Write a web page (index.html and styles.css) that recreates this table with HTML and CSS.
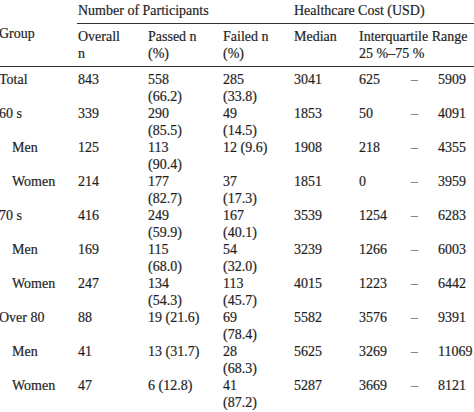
FILE: index.html
```html
<!DOCTYPE html>
<html lang="en">
<head>
<meta charset="utf-8">
<title>Participants and Healthcare Cost</title>
<link rel="stylesheet" href="styles.css">
</head>
<body>
<table class="data">
  <colgroup>
    <col class="c-group">
    <col class="c-overall">
    <col class="c-passed">
    <col class="c-failed">
    <col class="c-median">
    <col class="c-low">
    <col class="c-dash">
    <col class="c-high">
  </colgroup>
  <thead>
    <tr class="head-top">
      <th></th>
      <th colspan="3" class="span-a"><div class="span-label">Number of Participants</div></th>
      <th colspan="4" class="span-b"><div class="span-label">Healthcare Cost (USD)</div></th>
    </tr>
    <tr class="head-sub">
      <th class="group-head">Group</th>
      <th>Overall<br>n</th>
      <th>Passed n<br>(%)</th>
      <th>Failed n<br>(%)</th>
      <th>Median</th>
      <th colspan="3">Interquartile Range<br>25 %–75 %</th>
    </tr>
  </thead>
  <tbody>
    <tr class="first">
      <td>Total</td><td>843</td><td>558<br>(66.2)</td><td>285<br>(33.8)</td>
      <td>3041</td><td>625</td><td class="dash">–</td><td>5909</td>
    </tr>
    <tr>
      <td>60 s</td><td>339</td><td>290<br>(85.5)</td><td>49<br>(14.5)</td>
      <td>1853</td><td>50</td><td class="dash">–</td><td>4091</td>
    </tr>
    <tr>
      <td class="sub">Men</td><td>125</td><td>113<br>(90.4)</td><td>12 (9.6)</td>
      <td>1908</td><td>218</td><td class="dash">–</td><td>4355</td>
    </tr>
    <tr>
      <td class="sub">Women</td><td>214</td><td>177<br>(82.7)</td><td>37<br>(17.3)</td>
      <td>1851</td><td>0</td><td class="dash">–</td><td>3959</td>
    </tr>
    <tr>
      <td>70 s</td><td>416</td><td>249<br>(59.9)</td><td>167<br>(40.1)</td>
      <td>3539</td><td>1254</td><td class="dash">–</td><td>6283</td>
    </tr>
    <tr>
      <td class="sub">Men</td><td>169</td><td>115<br>(68.0)</td><td>54<br>(32.0)</td>
      <td>3239</td><td>1266</td><td class="dash">–</td><td>6003</td>
    </tr>
    <tr>
      <td class="sub">Women</td><td>247</td><td>134<br>(54.3)</td><td>113<br>(45.7)</td>
      <td>4015</td><td>1223</td><td class="dash">–</td><td>6442</td>
    </tr>
    <tr>
      <td>Over 80</td><td>88</td><td>19 (21.6)</td><td>69<br>(78.4)</td>
      <td>5582</td><td>3576</td><td class="dash">–</td><td>9391</td>
    </tr>
    <tr>
      <td class="sub">Men</td><td>41</td><td>13 (31.7)</td><td>28<br>(68.3)</td>
      <td>5625</td><td>3269</td><td class="dash">–</td><td>11069</td>
    </tr>
    <tr>
      <td class="sub">Women</td><td>47</td><td>6 (12.8)</td><td>41<br>(87.2)</td>
      <td>5287</td><td>3669</td><td class="dash">–</td><td>8121</td>
    </tr>
  </tbody>
</table>
</body>
</html>
```
FILE: styles.css
```css
html, body {
  margin: 0;
  padding: 0;
  background: #ffffff;
  overflow: hidden;
}

body {
  font-family: "Liberation Serif", "Times New Roman", serif;
  font-size: 14px;
  line-height: 17px;
  color: #1f1f1f;
  -webkit-text-stroke: 0.2px #1f1f1f;
}

.data {
  border-collapse: collapse;
  table-layout: fixed;
  width: 498px;
  margin-left: -1px;
}

.c-group { width: 79px; }
.c-overall { width: 70px; }
.c-passed { width: 75px; }
.c-failed { width: 71px; }
.c-median { width: 65px; }
.c-low { width: 52px; }
.c-dash { width: 27px; }
.c-high { width: 59px; }

.data th,
.data td {
  padding: 0;
  text-align: left;
  vertical-align: top;
  font-weight: normal;
  white-space: nowrap;
}

.head-top th {
  padding: 0;
}

.span-a {
  padding-right: 22px;
}

.span-label {
  padding: 2px 0 4px 0;
  border-bottom: 1px solid #333333;
}

.span-a .span-label {
  margin-left: -1px;
  padding-left: 1px;
}

.head-sub th {
  padding: 4px 0 4px 0;
  border-bottom: 1px solid #333333;
}

.head-sub th.group-head {
  padding-top: 1px;
}

.first td {
  padding-top: 4px;
}

.data td.sub {
  padding-left: 13px;
}

.data td.dash {
  color: #666666;
  -webkit-text-stroke: 0;
  padding-left: 0;
}
```
